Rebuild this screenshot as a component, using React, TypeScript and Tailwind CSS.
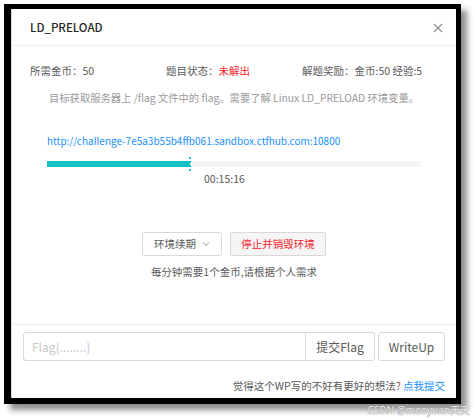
import React from "react";

const F = { fontFamily: '"Noto Sans CJK SC", "Noto Sans", sans-serif' };

export default function App() {
  return (
    <div className="relative w-[475px] h-[418px] bg-white overflow-hidden" style={F}>
      <div className="ml-[4px] mt-[4px] w-[457px] h-[400px] border-l-[7px] border-t-[5px] border-r-[5px] border-b-[6px] border-black bg-white shadow-[6px_6px_6px_rgba(0,0,0,0.45)] flex flex-col">
        <div className="flex-1 flex flex-col border-l border-[#d9d9d9]">
          {/* header */}
          <div className="h-[37px] shrink-0 border-b border-[#ececec] flex items-center justify-between pl-[18px] pr-[13px]">
            <span className="text-[11.5px] leading-[16px] text-[#262626] font-medium">LD_PRELOAD</span>
            <svg width="10" height="10" viewBox="0 0 10 10" className="mt-[1px]">
              <path d="M1 1L9 9M9 1L1 9" stroke="#8c8c8c" strokeWidth="1.1" />
            </svg>
          </div>
          {/* body */}
          <div className="h-[279px] shrink-0 border-b border-[#ececec] flex flex-col">
            <div className="mt-[17px] grid grid-cols-3 pl-[18px] pr-[18px] text-[10.5px] leading-[16px] text-[#595959]">
              <span>所需金币：50</span>
              <span>
                题目状态：<span className="text-[#f5222d]">未解出</span>
              </span>
              <span>解题奖励：金币:50 经验:5</span>
            </div>
            <div className="mt-[11px] text-center text-[10.3px] leading-[16px] text-[#999]">
              目标获取服务器上 /flag 文件中的 flag。需要了解 Linux LD_PRELOAD 环境变量。
            </div>
            <div className="mt-[27px] px-[35px] text-[10px] leading-[16px] text-[#1890ff]">
              http://challenge-7e5a3b55b4ffb061.sandbox.ctfhub.com:10800
            </div>
            <div className="mt-[12px] mx-[35px] relative h-[6px] bg-[#f5f5f5]">
              <div className="h-full w-[143px] bg-[#13c2c2]" />
              <div className="absolute left-[142px] top-[-4px] h-[14px] border-l-[2px] border-dotted border-[#13c2c2]" />
            </div>
            <div className="mt-[4px] pl-[192px] text-[10.5px] leading-[16px] text-[#595959]">00:15:16</div>
            <div className="mt-[45px] flex justify-center gap-[8px]">
              <div className="h-[24px] w-[80px] border border-[#d9d9d9] rounded-[2px] bg-white flex items-center justify-center gap-[6px] text-[10.5px] text-[#595959]">
                <span>环境续期</span>
                <svg width="8" height="6" viewBox="0 0 8 6">
                  <path d="M1 1.5L4 4.5L7 1.5" fill="none" stroke="#8c8c8c" strokeWidth="1" />
                </svg>
              </div>
              <div className="h-[24px] w-[96px] border border-[#d9d9d9] rounded-[2px] bg-[#f5f5f5] flex items-center justify-center text-[10.5px] text-[#f5222d]">
                停止并销毁环境
              </div>
            </div>
            <div className="mt-[8px] text-center text-[10.5px] leading-[16px] text-[#595959]">
              每分钟需要1个金币,请根据个人需求
            </div>
          </div>
          {/* footer */}
          <div className="flex-1 flex flex-col px-[11px]">
            <div className="mt-[7px] flex h-[29px]">
              <div className="flex-1 flex border border-[#d9d9d9] rounded-[3px] overflow-hidden">
                <div className="flex-1 flex items-center pl-[8px] text-[12px] text-[#c8c8c8]">Flag{'{'}........{'}'}</div>
                <div className="w-[69px] border-l border-[#d9d9d9] flex items-center justify-center text-[12px] text-[#595959]">提交Flag</div>
              </div>
              <div className="ml-[3px] w-[67px] border border-[#d9d9d9] rounded-[3px] flex items-center justify-center text-[12px] text-[#595959]">WriteUp</div>
            </div>
            <div className="mt-[17px] text-right text-[10.5px] leading-[16px] text-[#595959]">
              觉得这个WP写的不好有更好的想法? <span className="text-[#1890ff]">点我提交</span>
            </div>
          </div>
        </div>
      </div>
      <div className="absolute right-[5px] bottom-[1px] text-[10px] leading-[14px] text-[#eeeeee] [text-shadow:0_0_1px_#888,0_0_1px_#888]" style={{ fontFamily: '"Noto Sans", "Noto Sans CJK SC", sans-serif' }}>
        CSDN @mooyuan天天
      </div>
    </div>
  );
}
